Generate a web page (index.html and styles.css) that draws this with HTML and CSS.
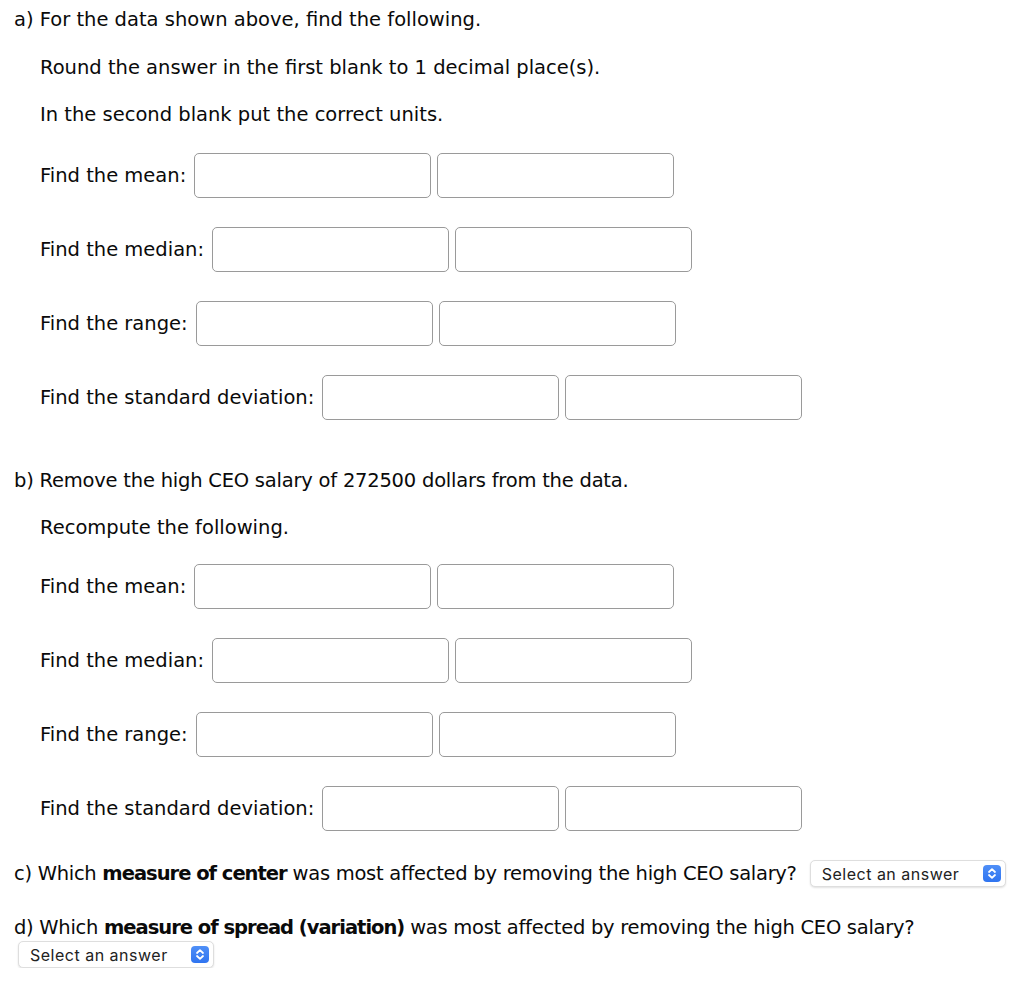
FILE: index.html
```html
<!DOCTYPE html>
<html>
<head>
<meta charset="utf-8">
<link rel="stylesheet" href="styles.css">
</head>
<body>
<div class="page">
  <p class="part">a) For the data shown above, find the following.</p>
  <p class="line l-round">Round the answer in the first blank to 1 decimal place(s).</p>
  <p class="line l-units">In the second blank put the correct units.</p>
  <div class="row first"><span class="label">Find the mean:</span><span class="box"></span><span class="box"></span></div>
  <div class="row"><span class="label">Find the median:</span><span class="box"></span><span class="box"></span></div>
  <div class="row"><span class="label">Find the range:</span><span class="box"></span><span class="box"></span></div>
  <div class="row"><span class="label">Find the standard deviation:</span><span class="box"></span><span class="box"></span></div>

  <p class="part part-b">b) Remove the high CEO salary of 272500 dollars from the data.</p>
  <p class="line l-recompute">Recompute the following.</p>
  <div class="row first-b"><span class="label">Find the mean:</span><span class="box"></span><span class="box"></span></div>
  <div class="row"><span class="label">Find the median:</span><span class="box"></span><span class="box"></span></div>
  <div class="row"><span class="label">Find the range:</span><span class="box"></span><span class="box"></span></div>
  <div class="row"><span class="label">Find the standard deviation:</span><span class="box"></span><span class="box"></span></div>

  <div class="part part-c"><span class="tight">c) Which <b>measure of center</b> was most affected by removing the high CEO salary?</span>
    <span class="select"><span class="sel-text">Select an answer</span><span class="sel-icon"><svg width="18" height="17" viewBox="0 0 18 17"><path d="M6 7 L9 4.2 L12 7 M6 10 L9 12.8 L12 10" fill="none" stroke="#fff" stroke-width="1.8" stroke-linecap="round" stroke-linejoin="round"/></svg></span></span>
  </div>
  <p class="part part-d tight">d) Which <b>measure of spread (variation)</b> was most affected by removing the high CEO salary?</p>
  <div class="sel-wrap">
    <span class="select"><span class="sel-text">Select an answer</span><span class="sel-icon"><svg width="18" height="17" viewBox="0 0 18 17"><path d="M6 7 L9 4.2 L12 7 M6 10 L9 12.8 L12 10" fill="none" stroke="#fff" stroke-width="1.8" stroke-linecap="round" stroke-linejoin="round"/></svg></span></span>
  </div>
</div>
</body>
</html>
```
FILE: styles.css
```css
html, body {
  margin: 0;
  padding: 0;
  background: #ffffff;
}
.page {
  font-family: "DejaVu Sans", Verdana, sans-serif;
  font-size: 19.5px;
  color: #0a0a0a;
  padding-top: 8px;
}
p {
  margin: 0;
}
b {
  letter-spacing: -1px;
}
.tight {
  letter-spacing: -0.28px;
}
.part {
  margin-left: 14px;
  line-height: 24px;
  height: 24px;
}
.line {
  margin-left: 40px;
  line-height: 24px;
  height: 24px;
}
.l-round { margin-top: 24px; }
.l-units { margin-top: 23px; }
.row {
  display: flex;
  align-items: center;
  margin-left: 40px;
  height: 45px;
  margin-top: 29px;
}
.row.first { margin-top: 26px; }
.row.first-b { margin-top: 24px; }
.label {
  margin-right: 8px;
}
.box {
  width: 235px;
  height: 43px;
  border: 1px solid #9a9a9a;
  border-radius: 5px;
  margin-right: 6px;
  background: #fff;
}
.part-b {
  margin-top: 49px;
  letter-spacing: -0.22px;
}
.l-recompute { margin-top: 23px; }
.part-c {
  margin-top: 29px;
  height: 27px;
  display: flex;
  align-items: center;
}
.part-c .select { margin-left: 13px; }
.part-d { margin-top: 29px; }
.sel-wrap {
  margin-left: 18px;
  margin-top: 1px;
}
.select {
  display: inline-flex;
  align-items: center;
  justify-content: space-between;
  width: 194px;
  height: 25px;
  border: 1px solid #dedede;
  border-radius: 5px;
  box-shadow: 0 1px 2px rgba(0,0,0,0.12);
  background: #fff;
  font-family: "Inter", "Liberation Sans", Arial, sans-serif;
  font-size: 16px;
  letter-spacing: 0.5px;
  color: #222;
  box-sizing: content-box;
  vertical-align: middle;
}
.sel-text {
  padding-left: 11px;
}
.sel-icon {
  width: 18px;
  height: 17px;
  border-radius: 4px;
  background: linear-gradient(#4f8ff7, #2f74f0);
  margin-right: 4px;
  display: flex;
}
```
